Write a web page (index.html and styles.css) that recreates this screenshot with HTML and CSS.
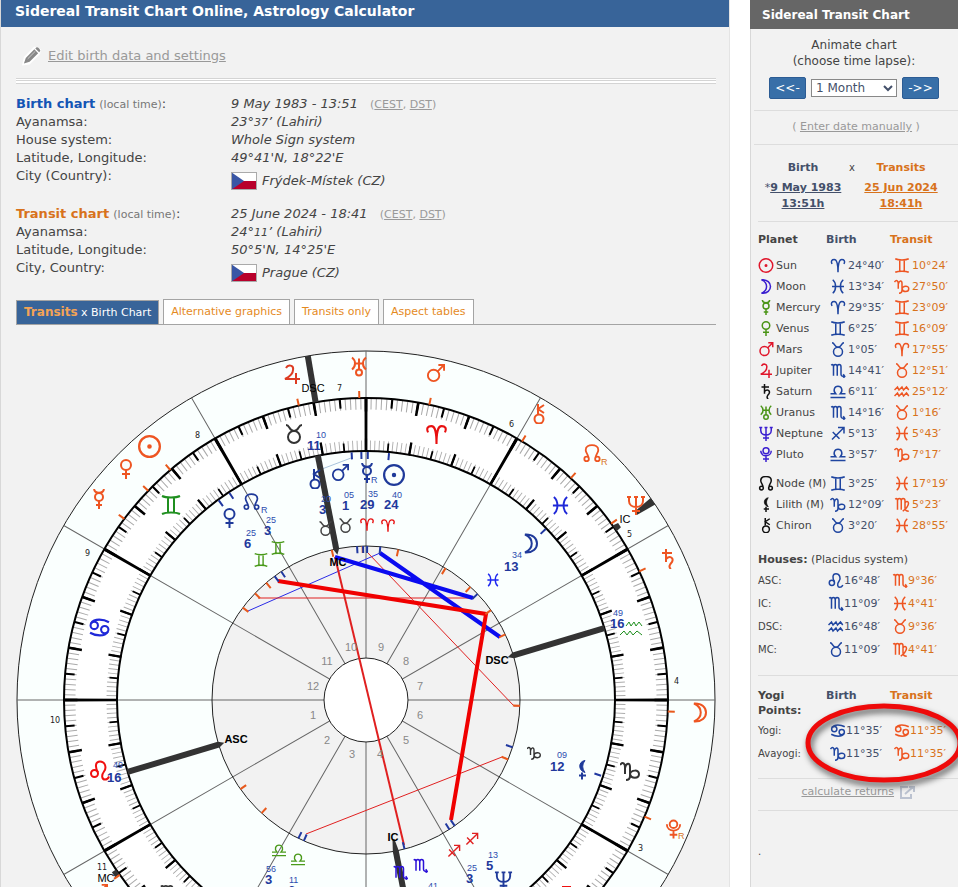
FILE: index.html
```
<!DOCTYPE html>
<html lang="en">
<head>
  <meta charset="UTF-8">
  <title>Sidereal Transit Chart Online, Astrology Calculator</title>
  <meta name="viewport" content="width=device-width, initial-scale=1.0">
  <link rel="stylesheet" href="styles.css">
</head>
<body>
  <!-- glyphs shared by the wheel and the tables -->
  <svg class="defs" aria-hidden="true">
    <symbol id="ari" viewBox="0 0 20 20"><path d="M2 8C0 4 2 2 5 2C9 2 10 8 10 19C10 8 11 2 15 2C18 2 20 4 18 8"/></symbol>
    <symbol id="tau" viewBox="0 0 20 20"><path d="M2 1C6 1 5 7 10 7S14 1 18 1"/><circle cx="10" cy="13" r="6"/></symbol>
    <symbol id="gem" viewBox="0 0 20 20"><path d="M1 1C5 3 15 3 19 1M1 19C5 17 15 17 19 19M7 2V18M13 2V18"/></symbol>
    <symbol id="can" viewBox="0 0 20 20"><circle cx="5" cy="8" r="3.5"/><circle cx="15" cy="12" r="3.5"/><path d="M2 6C5 1 14 2 19 5M18 14C15 19 6 18 1 15"/></symbol>
    <symbol id="leo" viewBox="0 0 20 20"><circle cx="4.5" cy="13" r="3.5"/><path d="M8 12C5 7 5 1 10 1S17 7 14 11S12 19 15 19S18 18 19 16"/></symbol>
    <symbol id="vir" viewBox="0 0 20 20"><path d="M1 3C3 1 4 3 4 5V17M4 5C4 1 9 1 9 5V17M9 5C9 1 14 1 14 5V14C14 17 16 19 19 19M14 8C16 4 20 6 18 11S14 16 11 19"/></symbol>
    <symbol id="lib" viewBox="0 0 20 20"><path d="M0 18H20M0 13H7C3 9 5 3 10 3S17 9 13 13H20"/></symbol>
    <symbol id="sco" viewBox="0 0 20 20"><path d="M1 3C3 1 4 3 4 5V17M4 5C4 1 9 1 9 5V17M9 5C9 1 14 1 14 5V15C14 18 16 18 19 18M17 15L19 18L17 20"/></symbol>
    <symbol id="sag" viewBox="0 0 20 20"><path d="M2 18L18 2M10 2H18V10M3 8L12 17"/></symbol>
    <symbol id="cap" viewBox="0 0 20 20"><path d="M0 4C3 0 5 3 5 6V13M5 7C6 2 10 1 10 6V15C10 18 8 19 6 19M10 13C11 9 19 8 19 13S11 18 10 13"/></symbol>
    <symbol id="aqu" viewBox="0 0 20 20"><path d="M0 8L4 4L6 8L10 4L12 8L16 4L19 8M0 16L4 12L6 16L10 12L12 16L16 12L19 16"/></symbol>
    <symbol id="pis" viewBox="0 0 20 20"><path d="M3 1C8 5 8 15 3 19M17 1C12 5 12 15 17 19M2 10H18"/></symbol>
    <symbol id="sun" viewBox="0 0 20 20"><circle cx="10" cy="10" r="9"/><circle cx="10" cy="10" r="1"/></symbol>
    <symbol id="moon" viewBox="0 0 20 20"><path d="M4 1C20 0 20 20 4 19C13 15 13 5 4 1Z"/></symbol>
    <symbol id="mer" viewBox="0 0 20 20"><circle cx="10" cy="8" r="4"/><path d="M5 0C6 5 14 5 15 0M10 12V20M7 16H13"/></symbol>
    <symbol id="ven" viewBox="0 0 20 20"><circle cx="10" cy="6" r="5"/><path d="M10 11V20M6 15H14"/></symbol>
    <symbol id="mar" viewBox="0 0 20 20"><circle cx="8" cy="12" r="6"/><path d="M12 8L19 1M13 1H19V7"/></symbol>
    <symbol id="jup" viewBox="0 0 20 20"><path d="M4 4C6 0 12 1 11 6C11 10 7 13 3 15H18M14 9V20"/></symbol>
    <symbol id="sat" viewBox="0 0 20 20"><path d="M8 0V13M4 4H14M8 10C12 6 16 9 14 13C12 15 10 18 13 20"/></symbol>
    <symbol id="ura" viewBox="0 0 20 20"><path d="M3 1C7 4 7 10 3 13M17 1C13 4 13 10 17 13M5 7H15M10 2V13"/><circle cx="10" cy="16" r="3"/></symbol>
    <symbol id="nep" viewBox="0 0 20 20"><path d="M3 1V6C3 14 17 14 17 6V1M10 1V20M6 16H14M1 2H5M15 2H19M8 2H12"/></symbol>
    <symbol id="plu" viewBox="0 0 20 20"><circle cx="10" cy="5" r="4"/><path d="M3 5C3 14 17 14 17 5M10 12V20M6 16H14"/></symbol>
    <symbol id="node" viewBox="0 0 20 20"><circle cx="4" cy="16" r="2.5"/><circle cx="16" cy="16" r="2.5"/><path d="M6 14C5 10 3 9 3 6C3 -1 17 -1 17 6C17 9 15 10 14 14"/></symbol>
    <symbol id="lil" viewBox="0 0 20 20"><path class="solid" d="M13 1C6 2 6 11 13 13C10 9 10 5 13 1Z"/><path d="M10 13V20M7 16H14"/></symbol>
    <symbol id="chi" viewBox="0 0 20 20"><circle cx="10" cy="15" r="4.5"/><path d="M9 0V10M15 1L9 5L15 9"/></symbol>
  </svg>

  <div class="layout">
    <main class="main">
      <h1>Sidereal Transit Chart Online, Astrology Calculator</h1>
      <div class="content">
        <div class="edit">
          <svg class="pencil" viewBox="0 0 20 20"><path fill="#fff" d="M0 20L2 11L13 0L20 3L19 8L8 19Z"/><path fill="#888" d="M2 18L4 12L13 3L17 7L8 16ZM14 2L15 1Q16 0 18 2Q20 4 19 5L18 6Z"/><path stroke="#ccc" d="M6 13L14 5"/></svg>
          <a href="#">Edit birth data and settings</a>
        </div>
        <div class="rules"></div>

        <dl class="info">
          <dt><b class="blue">Birth chart</b> <small>(local time)</small>:</dt>
          <dd>9 May 1983 - 13:51 <small>(<a href="#">CEST</a>, <a href="#">DST</a>)</small></dd>
          <dt>Ayanamsa:</dt><dd>23°<span class="min">37</span>’ (Lahiri)</dd>
          <dt>House system:</dt><dd>Whole Sign system</dd>
          <dt>Latitude, Longitude:</dt><dd>49°41'N, 18°22'E</dd>
          <dt>City (Country):</dt>
          <dd class="city"><svg class="flag" viewBox="0 0 26 18"><path fill="#fff" d="M0 0H26V9H0Z"/><path fill="#b8002b" d="M0 9H26V18H0Z"/><path fill="#3956a5" d="M0 0L13 9L0 18Z"/><path fill="none" stroke="#aaa" stroke-width="2" d="M0 0H26V18H0Z"/></svg> Frýdek-Místek (CZ)</dd>
        </dl>
        <dl class="info">
          <dt><b class="orange">Transit chart</b> <small>(local time)</small>:</dt>
          <dd>25 June 2024 - 18:41 <small>(<a href="#">CEST</a>, <a href="#">DST</a>)</small></dd>
          <dt>Ayanamsa:</dt><dd>24°<span class="min">11</span>’ (Lahiri)</dd>
          <dt>Latitude, Longitude:</dt><dd>50°5'N, 14°25'E</dd>
          <dt>City, Country:</dt>
          <dd class="city"><svg class="flag" viewBox="0 0 26 18"><path fill="#fff" d="M0 0H26V9H0Z"/><path fill="#b8002b" d="M0 9H26V18H0Z"/><path fill="#3956a5" d="M0 0L13 9L0 18Z"/><path fill="none" stroke="#aaa" stroke-width="2" d="M0 0H26V18H0Z"/></svg> Prague (CZ)</dd>
        </dl>

        <nav class="tabs">
          <a class="active" href="#"><b>Transits</b> x Birth Chart</a>
          <a href="#">Alternative graphics</a>
          <a href="#">Transits only</a>
          <a href="#">Aspect tables</a>
        </nav>

        <svg class="wheel" viewBox="16 350 700 700">
          <circle class="thin" cx="366" cy="700" r="349" fill="#fafffe"/>
          <circle cx="366" cy="700" r="302" fill="#fff"/>
          <circle cx="366" cy="700" r="249" fill="#fafffe"/>
          <circle cx="366" cy="700" r="154" fill="#f2f2f2"/>

          <!-- house lines -->
          <g class="house">
            <path d="M17 700H715M366 351V1049"/>
            <path d="M17 700H715M366 351V1049" transform="rotate(30 366 700)"/>
            <path d="M17 700H715M366 351V1049" transform="rotate(60 366 700)"/>
          </g>
          <circle class="thin" cx="366" cy="700" r="154" fill="none"/>
          <circle class="thin" cx="366" cy="700" r="42" fill="#fff"/>

          <!-- degree scale: 1, 5 and 10 degrees -->
          <g class="scale">
            <circle class="deg" cx="366" cy="700" r="296" pathLength="360"/>
            <circle class="deg" cx="366" cy="700" r="254" pathLength="360"/>
            <circle class="five" cx="366" cy="700" r="297" pathLength="360"/>
            <circle class="five" cx="366" cy="700" r="253" pathLength="360"/>
            <circle class="ten" cx="366" cy="700" r="295" pathLength="360"/>
            <circle class="ten" cx="366" cy="700" r="255" pathLength="360"/>
            <circle class="ring" cx="366" cy="700" r="302"/>
            <circle class="ring" cx="366" cy="700" r="249"/>
            <circle class="sign" cx="366" cy="700" r="275" pathLength="360"/>
          </g>

          <!-- aspects -->
          <g fill="none">
            <path stroke="#2b2be6" d="M248 611L380 553"/>
            <path stroke="#e02020" d="M258 598H474M368 553L514 706H520M306 834L502 757L508 759"/>
            <path stroke="#a9c4dc" d="M322 469L351 458"/>
            <path stroke="#e02020" stroke-width="2" d="M335 557L404 845"/>
            <path stroke="#0a0af0" stroke-width="4" d="M335 557L473 598M380 553L500 637"/>
            <path stroke="#f00000" stroke-width="4" d="M278 581L486 614L451 820"/>
          </g>

          <!-- angles -->
          <g class="axis">
            <path transform="rotate(-99.6 366 700)" d="M668 697H715V703H668Z"/>
            <path transform="rotate(-34.7 366 700)" d="M668 697L674 698V703L668 704ZM694 698L715 696V704L694 702Z"/>
            <path transform="rotate(-214.7 366 700)" d="M668 697H673V703H668Z"/>
            <path transform="rotate(-196.8 366 700)" d="M615 697H520L514 700L520 703H615Z"/>
            <path transform="rotate(-16.8 366 700)" d="M615 697H520L514 700L520 703H615Z"/>
            <path transform="rotate(-101.15 366 700)" d="M615 697H520L514 700L520 703H615Z"/>
            <path transform="rotate(-281.15 366 700)" d="M615 697H520L508 699V701L520 703H615Z"/>
          </g>

          <!-- transit positions -->
          <g class="mark transit-mark">
            <path transform="rotate(-130.4 366 700)" d="M668 700h7M520 700h-7"/>
            <path transform="rotate(-357.83 366 700)" d="M668 700h7M520 700h-7"/>
            <path transform="rotate(-143.15 366 700)" d="M668 700h7M520 700h-7"/>
            <path transform="rotate(-136.15 366 700)" d="M668 700h7M520 700h-7"/>
            <path transform="rotate(-77.9 366 700)" d="M668 700h7M520 700h-7"/>
            <path transform="rotate(-102.85 366 700)" d="M668 700h7M520 700h-7"/>
            <path transform="rotate(-25.2 366 700)" d="M668 700h7M520 700h-7"/>
            <path transform="rotate(-91.27 366 700)" d="M668 700h7M520 700h-7"/>
            <path transform="rotate(-35.72 366 700)" d="M668 700h7M520 700h-7"/>
            <path transform="rotate(-337.28 366 700)" d="M668 700h7M520 700h-7"/>
            <path transform="rotate(-47.3 366 700)" d="M668 700h7M520 700h-7"/>
            <path transform="rotate(-58.9 366 700)" d="M668 700h7M520 700h-7"/>
            <path transform="rotate(-215.38 366 700)" d="M668 700h7M520 700h-7"/>
            <path transform="rotate(-227.3 366 700)" d="M520 700h-7"/>
          </g>

          <!-- birth positions -->
          <g class="mark birth-mark">
            <path transform="rotate(-84.67 366 700)" d="M614 700h-7M520 700h-7"/>
            <path transform="rotate(-43.57 366 700)" d="M614 700h-7M520 700h-7"/>
            <path transform="rotate(-89.58 366 700)" d="M614 700h-7M520 700h-7"/>
            <path transform="rotate(-126.42 366 700)" d="M614 700h-7M520 700h-7"/>
            <path transform="rotate(-91.08 366 700)" d="M614 700h-7M520 700h-7"/>
            <path transform="rotate(-284.5 366 700)" d="M520 700h-7"/>
            <path transform="rotate(-246.18 366 700)" d="M520 700h-7"/>
            <path transform="rotate(-243.95 366 700)" d="M520 700h-7"/>
            <path transform="rotate(-305.2 366 700)" d="M520 700h-7"/>
            <path transform="rotate(-302.8 366 700)" d="M520 700h-7"/>
            <path transform="rotate(-123.4 366 700)" d="M614 700h-7M520 700h-7"/>
            <path transform="rotate(-342.15 366 700)" d="M613 700h-7M520 700h-7"/>
            <path transform="rotate(-93.33 366 700)" d="M614 700h-7M520 700h-7"/>
          </g>

          <!-- signs -->
          <g class="glyph">
            <use href="#tau" x="284" y="424" width="20" height="20" color="#333"/>
            <use href="#ari" x="426" y="424" width="21" height="21" color="#e81010"/>
            <use href="#pis" x="551" y="495" width="19" height="21" color="#1f28d8"/>
            <use href="#gem" x="161" y="495" width="20" height="20" color="#1f8f1f"/>
            <use href="#can" x="88" y="617" width="23" height="21" color="#1f28d8"/>
            <use href="#leo" x="90" y="760" width="20" height="21" color="#f01010"/>
            <use href="#cap" x="620" y="761" width="20" height="20" color="#333"/>
            <use href="#vir" x="160" y="883" width="18" height="20" color="#333"/>
            <use href="#sag" x="552" y="885" width="20" height="20" color="#f01010"/>
          </g>
          <path class="aquarius" d="M626 626L629 622L631 626L634 622L636 626L639 622L642 626M620 635L624 631L627 635L630 631L633 635L637 631L642 635"/>

          <!-- transiting planets -->
          <g class="glyph" color="#ee5522">
            <use href="#sun" x="138" y="435" width="23" height="23"/>
            <use href="#ven" x="116" y="459" width="20" height="20"/>
            <use href="#mer" x="89" y="489" width="20" height="20"/>
            <use href="#jup" x="282" y="364" width="20" height="20" color="#dd3c22"/>
            <use href="#ura" x="349" y="356" width="20" height="21"/>
            <use href="#mar" x="426" y="364" width="19" height="19"/>
            <use href="#chi" x="529" y="404" width="20" height="20"/>
            <use href="#node" x="583" y="444" width="18" height="19"/>
            <use href="#nep" x="626" y="495" width="20" height="20"/>
            <use href="#sat" x="658" y="549" width="20" height="20"/>
            <use href="#moon" x="690" y="702" width="20" height="21"/>
            <use href="#plu" x="664" y="819" width="19" height="20"/>
            <use href="#mar" x="90" y="884" width="18" height="18"/>
          </g>

          <!-- birth planets -->
          <g class="glyph" color="#1f3a9a">
            <use href="#ven" x="219" y="508" width="21" height="20"/>
            <use href="#node" x="243" y="493" width="17" height="18"/>
            <use href="#chi" x="305" y="469" width="20" height="20"/>
            <use href="#mar" x="331" y="464" width="18" height="18"/>
            <use href="#mer" x="357" y="463" width="20" height="20"/>
            <use href="#sun" x="383" y="464" width="22" height="22"/>
            <use href="#moon" x="521" y="533" width="20" height="21"/>
            <use href="#lil" x="572" y="759" width="20" height="21"/>
            <use href="#nep" x="494" y="870" width="19" height="20"/>
          </g>
          <g class="glyph">
            <use href="#tau" x="318" y="521" width="15" height="15" color="#444"/>
            <use href="#tau" x="338" y="518" width="15" height="15" color="#444"/>
            <use href="#ari" x="360" y="517" width="14" height="15" color="#e81010"/>
            <use href="#ari" x="381" y="518" width="14" height="15" color="#e81010"/>
            <use href="#gem" x="271" y="541" width="14" height="14" color="#4a9a1a"/>
            <use href="#gem" x="254" y="553" width="14" height="14" color="#4a9a1a"/>
            <use href="#pis" x="486" y="573" width="14" height="14" color="#1f28f0"/>
            <use href="#cap" x="527" y="746" width="14" height="14" color="#333"/>
            <use href="#lib" x="272" y="843" width="14" height="14" color="#4a9a1a"/>
            <use href="#lib" x="291" y="852" width="14" height="14" color="#4a9a1a"/>
            <use href="#sco" x="393" y="865" width="15" height="15" color="#2a10d8"/>
            <use href="#sco" x="413" y="858" width="15" height="15" color="#2a10d8"/>
            <use href="#sag" x="447" y="844" width="14" height="14" color="#e02020"/>
            <use href="#sag" x="465" y="832" width="14" height="14" color="#e02020"/>
          </g>

          <!-- degrees and minutes -->
          <g class="degrees">
            <text x="307" y="450">11</text><text x="319" y="514">3</text><text x="342" y="510">1</text>
            <text x="360" y="509">29</text><text x="384" y="509">24</text><text x="264" y="535">3</text>
            <text x="244" y="548">6</text><text x="504" y="571">13</text><text x="610" y="628">16</text>
            <text x="107" y="782">16</text><text x="550" y="771">12</text><text x="265" y="884">3</text>
            <text x="288" y="895">6</text><text x="466" y="883">3</text><text x="486" y="870">5</text>
          </g>
          <g class="minutes">
            <text x="316" y="438">10</text><text x="321" y="502">20</text><text x="344" y="498">05</text>
            <text x="368" y="497">35</text><text x="392" y="498">40</text><text x="266" y="523">25</text>
            <text x="246" y="536">25</text><text x="512" y="558">34</text><text x="613" y="616">49</text>
            <text x="113" y="768">49</text><text x="557" y="758">09</text><text x="266" y="872">56</text>
            <text x="289" y="883">11</text><text x="428" y="889">41</text><text x="467" y="871">25</text>
            <text x="488" y="858">13</text>
            <text x="261" y="513">R</text><text x="371" y="483">R</text>
            <text class="retro" x="601" y="465">R</text><text class="retro" x="678" y="839">R</text>
          </g>

          <!-- house numbers -->
          <g class="houses">
            <text x="420" y="690">7</text><text x="406" y="665">8</text><text x="381" y="651">9</text>
            <text x="351" y="651">10</text><text x="327" y="665">11</text><text x="313" y="690">12</text>
            <text x="313" y="719">1</text><text x="327" y="744">2</text><text x="352" y="758">3</text>
            <text x="380" y="758">4</text><text x="406" y="744">5</text><text x="420" y="719">6</text>
          </g>
          <g class="outer">
            <text x="195" y="438">8</text><text x="85" y="556">9</text><text x="50" y="723">10</text>
            <text x="97" y="870">11</text><text x="337" y="391">7</text><text x="509" y="427">6</text>
            <text x="627" y="537">5</text><text x="674" y="684">4</text><text x="638" y="851">3</text>
          </g>
          <g class="angles">
            <text x="236" y="743">ASC</text><text x="497" y="664">DSC</text>
            <text x="338" y="566">MC</text><text x="393" y="841">IC</text>
          </g>
          <g class="angles light">
            <text x="313" y="392">DSC</text><text x="625" y="523">IC</text><text x="106" y="882">MC</text>
          </g>
        </svg>
      </div>
    </main>

    <aside class="side">
      <h2>Sidereal Transit Chart</h2>
      <form class="animate">
        <label for="lapse">Animate chart<br>(choose time lapse):</label>
        <div class="controls">
          <button type="button">&lt;&lt;-</button>
          <select id="lapse"><option>1 Month</option><option>1 Day</option><option>1 Year</option></select>
          <button type="button">-&gt;&gt;</button>
        </div>
      </form>
      <p class="manual">( <a href="#">Enter date manually</a> )</p>

      <div class="dates">
        <div class="navy"><b>Birth</b><span class="star">*</span><a href="#">9 May 1983</a><br><a href="#">13:51h</a></div>
        <span class="x">x</span>
        <div class="orange"><b>Transits</b><a href="#">25 Jun 2024</a><br><a href="#">18:41h</a></div>
      </div>

      <table class="planets">
        <thead><tr><th>Planet</th><th class="navy">Birth</th><th class="orange">Transit</th></tr></thead>
        <tbody>
          <tr><td><svg class="red"><use href="#sun"/></svg>Sun</td><td><svg><use href="#ari"/></svg>24°40′</td><td><svg><use href="#gem"/></svg>10°24′</td></tr>
          <tr><td><svg class="violet"><use href="#moon"/></svg>Moon</td><td><svg><use href="#pis"/></svg>13°34′</td><td><svg><use href="#cap"/></svg>27°50′</td></tr>
          <tr><td><svg class="green"><use href="#mer"/></svg>Mercury</td><td><svg><use href="#ari"/></svg>29°35′</td><td><svg><use href="#gem"/></svg>23°09′</td></tr>
          <tr><td><svg class="green"><use href="#ven"/></svg>Venus</td><td><svg><use href="#gem"/></svg>6°25′</td><td><svg><use href="#gem"/></svg>16°09′</td></tr>
          <tr><td><svg class="red"><use href="#mar"/></svg>Mars</td><td><svg><use href="#tau"/></svg>1°05′</td><td><svg><use href="#ari"/></svg>17°55′</td></tr>
          <tr><td><svg class="red"><use href="#jup"/></svg>Jupiter</td><td><svg><use href="#sco"/></svg>14°41′</td><td><svg><use href="#tau"/></svg>12°51′</td></tr>
          <tr><td><svg class="black"><use href="#sat"/></svg>Saturn</td><td><svg><use href="#lib"/></svg>6°11′</td><td><svg><use href="#aqu"/></svg>25°12′</td></tr>
          <tr><td><svg class="green"><use href="#ura"/></svg>Uranus</td><td><svg><use href="#sco"/></svg>14°16′</td><td><svg><use href="#tau"/></svg>1°16′</td></tr>
          <tr><td><svg class="violet"><use href="#nep"/></svg>Neptune</td><td><svg><use href="#sag"/></svg>5°13′</td><td><svg><use href="#pis"/></svg>5°43′</td></tr>
          <tr><td><svg class="violet"><use href="#plu"/></svg>Pluto</td><td><svg><use href="#lib"/></svg>3°57′</td><td><svg><use href="#cap"/></svg>7°17′</td></tr>
        </tbody>
        <tbody class="points">
          <tr><td><svg class="black"><use href="#node"/></svg>Node (M)</td><td><svg><use href="#gem"/></svg>3°25′</td><td><svg><use href="#pis"/></svg>17°19′</td></tr>
          <tr><td><svg class="black"><use href="#lil"/></svg>Lilith (M)</td><td><svg><use href="#cap"/></svg>12°09′</td><td><svg><use href="#vir"/></svg>5°23′</td></tr>
          <tr><td><svg class="black"><use href="#chi"/></svg>Chiron</td><td><svg><use href="#tau"/></svg>3°20′</td><td><svg><use href="#pis"/></svg>28°55′</td></tr>
        </tbody>
      </table>

      <table class="planets houses-table">
        <caption><b>Houses:</b> (Placidus system)</caption>
        <tbody>
          <tr><td>ASC:</td><td><svg><use href="#leo"/></svg>16°48′</td><td><svg><use href="#sco"/></svg>9°36′</td></tr>
          <tr><td>IC:</td><td><svg><use href="#sco"/></svg>11°09′</td><td><svg><use href="#pis"/></svg>4°41′</td></tr>
          <tr><td>DSC:</td><td><svg><use href="#aqu"/></svg>16°48′</td><td><svg><use href="#tau"/></svg>9°36′</td></tr>
          <tr><td>MC:</td><td><svg><use href="#tau"/></svg>11°09′</td><td><svg><use href="#vir"/></svg>4°41′</td></tr>
        </tbody>
      </table>

      <div class="yogi">
        <table class="planets houses-table">
          <thead><tr><th>Yogi<br>Points:</th><th class="navy">Birth</th><th class="orange">Transit</th></tr></thead>
          <tbody>
            <tr><td>Yogi:</td><td><svg><use href="#can"/></svg>11°35′</td><td><svg><use href="#can"/></svg>11°35′</td></tr>
            <tr><td>Avayogi:</td><td><svg><use href="#cap"/></svg>11°35′</td><td><svg><use href="#cap"/></svg>11°35′</td></tr>
          </tbody>
        </table>
        <svg class="highlight" viewBox="0 0 170 96"><ellipse cx="80" cy="44" rx="76" ry="37"/></svg>
      </div>

      <p class="returns"><a href="#">calculate returns</a>
        <svg viewBox="0 0 15 13"><path d="M8 1H1V12H11V8M5 8L13 1M9 1H14V6"/></svg></p>
      <p class="dot">.</p>
    </aside>
  </div>
</body>
</html>
```
FILE: styles.css
```
* {
  box-sizing: border-box;
}

body {
  margin: 0;
  background: #fff;
  color: #444;
  font-family: Verdana, "DejaVu Sans", sans-serif;
  font-size: 13px;
}

.defs {
  display: none;
}

.solid {
  fill: currentColor;
  stroke-width: 1;
}

.layout {
  display: grid;
  grid-template-columns: minmax(0, 1fr) 208px;
  grid-template-rows: 100vh;
  column-gap: 20px;
  height: 100vh;
  overflow: hidden;
}

.main {
  overflow: hidden;
  background: #f2f2f2;
  border-left: 1px solid #d8d8d8;
  border-right: 1px solid #e4e4e4;
}

h1 {
  margin: 0 -1px;
  height: 27px;
  padding-left: 15px;
  background: #386499;
  color: #fff;
  font-size: 14px;
  line-height: 23px;
}

.content {
  padding: 0 13px 0 15px;
}

.edit {
  display: flex;
  align-items: center;
  gap: 7px;
  height: 51px;
  padding: 6px 0 0 6px;
}

.edit a {
  color: #999;
}

.pencil {
  width: 19px;
  height: 20px;
}

.rules {
  height: 6px;
  border-top: 1px solid #d4d4d4;
  border-bottom: 1px solid #d4d4d4;
  background: linear-gradient(#fff 1px, #d4d4d4 1px, #d4d4d4 2px, #fff 2px);
}

.info {
  display: grid;
  grid-template-columns: 215px 1fr;
  grid-auto-rows: 18px;
  margin: 11px 0 20px;
  line-height: 18px;
}

.info + .info {
  margin: 0 0 22px;
}

.info dd {
  margin: 0;
  font-style: italic;
}

.info small {
  color: #777;
  font-size: 11px;
}

.info dd small {
  margin-left: 8px;
  color: #999;
  font-style: normal;
}

.info small a {
  color: #999;
}

.min {
  font-size: 11px;
}

.info .city {
  display: flex;
  align-items: center;
  gap: 5px;
  padding-top: 10px;
}

.flag {
  width: 26px;
  height: 18px;
}

.blue {
  color: #1455b5;
}

.orange {
  color: #d8721c;
}

.navy {
  color: #44506a;
}

.tabs {
  display: flex;
  align-items: flex-end;
  gap: 4px;
  height: 26px;
  border-bottom: 1px solid #a4a4a4;
}

.tabs a {
  height: 25px;
  padding: 0 7px;
  border: 1px solid #a4a4a4;
  border-bottom: 0;
  background: #fff;
  color: #e58a1e;
  font-size: 11px;
  line-height: 24px;
  text-decoration: none;
  white-space: nowrap;
}

.tabs .active {
  height: 24px;
  background: #386499;
  color: #fff;
  line-height: 23px;
}

.tabs b {
  color: #f3a355;
  font-size: 12px;
}

/* wheel */
.wheel {
  display: block;
  width: 100%;
  margin-top: 25px;
}

.thin {
  stroke: #222;
}

.house {
  stroke: #666;
}

.scale circle {
  fill: none;
  stroke: #000;
}

.scale .deg {
  stroke: #aaa;
  stroke-width: 11;
  stroke-dasharray: 0.2 0.8;
  stroke-dashoffset: 0.1;
}

.scale .five {
  stroke-width: 9;
  stroke-dasharray: 0.4 4.6;
  stroke-dashoffset: 0.2;
}

.scale .ten {
  stroke-width: 13;
  stroke-dasharray: 0.5 9.5;
  stroke-dashoffset: 0.25;
}

.scale .ring {
  stroke-width: 2;
}

.scale .sign {
  stroke-width: 53;
  stroke-dasharray: 0.6 29.4;
  stroke-dashoffset: 0.3;
}

.axis {
  fill: #333;
}

.mark {
  stroke-width: 2;
}

.transit-mark {
  stroke: #e8591c;
}

.birth-mark {
  stroke: #2038a0;
}

.glyph,
.planets svg {
  fill: none;
  stroke: currentColor;
  stroke-width: 2;
}

.glyph use {
  stroke: currentColor;
}

.aquarius {
  fill: none;
  stroke: #1f8f1f;
}

.degrees,
.minutes,
.houses {
  font-family: Arial, "Liberation Sans", sans-serif;
}

.degrees {
  fill: #22389c;
  font-size: 13px;
  font-weight: bold;
}

.minutes {
  fill: #2c4cae;
  font-size: 9px;
}

.minutes .retro {
  fill: #d8721c;
}

.houses {
  fill: #888;
  font-size: 11px;
  text-anchor: middle;
}

.outer {
  fill: #222;
  font-size: 8px;
}

.angles {
  fill: #000;
  font-family: "Liberation Sans Narrow", "Liberation Sans", sans-serif;
  font-size: 11px;
  font-weight: bold;
  text-anchor: middle;
}

.angles.light {
  font-weight: normal;
}

/* sidebar */
.side {
  min-width: 0;
  background: #f2f2f2;
  border-left: 1px solid #d8d8d8;
}

h2 {
  margin: 0 0 0 -1px;
  height: 29px;
  padding-left: 12px;
  background: #666;
  color: #fff;
  font-size: 12px;
  line-height: 31px;
}

.animate {
  height: 82px;
  margin-left: 3px;
  padding: 8px 4px 0 0;
  border-bottom: 1px solid #ddd;
  font-size: 12px;
  line-height: 16px;
  text-align: center;
}

.controls {
  display: flex;
  justify-content: center;
  align-items: center;
  gap: 5px;
  margin-top: 8px;
}

.controls button {
  width: 37px;
  height: 22px;
  padding: 0;
  border: 1px solid #2c5c94;
  border-radius: 2px;
  background: #386fa8;
  color: #fff;
  font: 12px Verdana, "DejaVu Sans", sans-serif;
}

.controls select {
  width: 86px;
  height: 18px;
  padding: 0;
  border: 1px solid #888;
  border-radius: 0;
  background: #fff;
  color: #44506a;
  font: 12px Verdana, "DejaVu Sans", sans-serif;
}

.manual {
  height: 34px;
  margin: 0 0 0 3px;
  padding-top: 8px;
  border-bottom: 1px solid #ddd;
  color: #999;
  font-size: 11px;
  line-height: 16px;
  text-align: center;
}

.manual a,
.returns a {
  color: #999;
}

.dates {
  display: grid;
  grid-template-columns: 90px 1fr 90px;
  height: 77px;
  margin-left: 7px;
  padding: 15px 12px 0 0;
  border-bottom: 1px solid #ddd;
  font-size: 11px;
  line-height: 16px;
  text-align: center;
}

.dates b {
  display: block;
  margin-bottom: 4px;
}

.dates a {
  color: inherit;
  font-weight: bold;
}

.dates .x {
  font-size: 10px;
}

.planets {
  width: 200px;
  margin: 8px 0 0 7px;
  border-collapse: collapse;
  table-layout: fixed;
  font-size: 11px;
}

.planets th {
  height: 25px;
  padding: 3px 0 0;
  text-align: left;
  vertical-align: top;
}

.planets th:nth-child(1),
.planets td:nth-child(1) {
  width: 72px;
}

.planets th:nth-child(2) {
  width: 64px;
}

.planets th:nth-child(2),
.planets th:nth-child(3) {
  position: relative;
  left: -4px;
}

.planets td {
  height: 21px;
  padding: 0;
  line-height: 15px;
  white-space: nowrap;
}

.planets td:nth-child(2) {
  width: 64px;
  color: #44506a;
}

.planets td:nth-child(3) {
  color: #d8721c;
}

.planets svg {
  width: 16px;
  height: 15px;
  margin-right: 2px;
  vertical-align: middle;
}

.planets td:nth-child(2) svg {
  color: #1f45a0;
}

.planets td:nth-child(3) svg {
  color: #ee5522;
}

.planets .red { color: #e0162b; }
.planets .violet { color: #3b1fd0; }
.planets .green { color: #4a9416; }
.planets .black { color: #111; }

.points::before {
  content: "";
  display: block;
  height: 8px;
}

.houses-table {
  margin-top: 17px;
}

.houses-table caption {
  height: 16px;
  text-align: left;
  white-space: nowrap;
}

.houses-table td {
  height: 23px;
}

.houses-table td:nth-child(1) {
  font-size: 10px;
}

.planets.houses-table td:nth-child(1) {
  width: 70px;
}

.houses-table svg {
  margin-right: 0;
}

.yogi {
  position: relative;
  margin: 14px 0 0 7px;
  border-top: 1px solid #ddd;
  border-bottom: 1px solid #ddd;
}

.yogi .planets {
  margin: 9px 0 13px;
}

.yogi th {
  height: 34px;
  line-height: 15px;
}

.highlight {
  position: absolute;
  left: 46px;
  top: 23px;
  width: 170px;
  height: 96px;
  overflow: visible;
  fill: none;
  stroke: #ee0a0a;
  stroke-width: 5;
  filter: drop-shadow(2px 4px 3px #555);
}

.returns {
  height: 32px;
  margin: 0 0 0 7px;
  padding-top: 6px;
  border-bottom: 1px solid #ddd;
  font-size: 11px;
  text-align: center;
}

.returns svg {
  width: 15px;
  height: 13px;
  margin-left: 2px;
  fill: none;
  stroke: #bbc2d0;
  stroke-width: 2;
  vertical-align: middle;
}

.dot {
  margin: 35px 0 0 7px;
  font-size: 10px;
}
```
